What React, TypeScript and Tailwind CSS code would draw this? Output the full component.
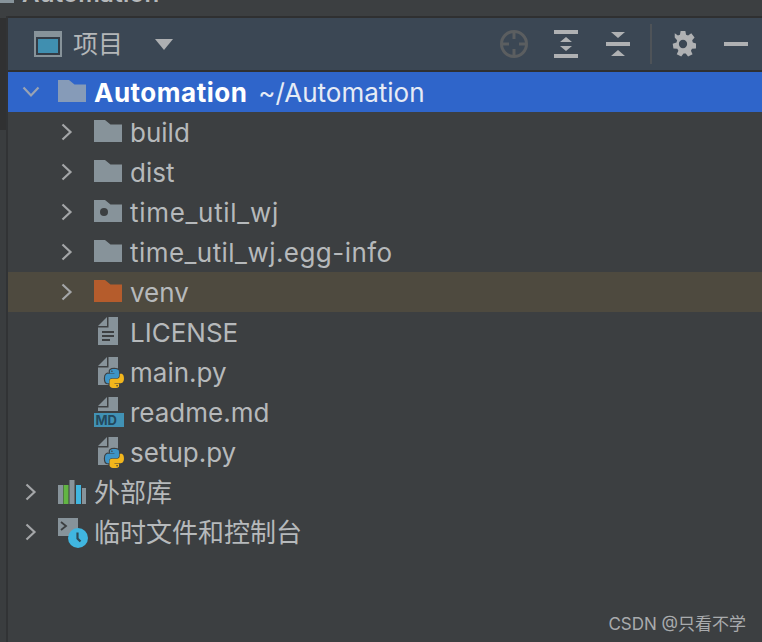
import type { ReactNode } from "react";

const font = "font-['Inter','Noto_Sans_CJK_SC',sans-serif]";

function Folder({ color = "#87939a", dot }: { color?: string; dot?: boolean }) {
  return (
    <svg width="28" height="22" viewBox="0 0 28 22" className="-mt-[2px] shrink-0">
      <path d="M0 0h11l5.500 4.500H28V22H0z" fill={color} />
      {dot && <circle cx="10" cy="12" r="4" fill="#3c3f41" />}
    </svg>
  );
}

function FileBase() {
  return (
    <svg width="32" height="30" viewBox="0 0 32 30" className="-mt-[2px] shrink-0">
      <path d="M4 10l9-9v9z" fill="#87939a" />
      <path d="M14.500 1H24v28H4V11.500h10.500z" fill="#87939a" />
      <g fill="#3c3f41">
        <rect x="8" y="15" width="12" height="2" />
        <rect x="8" y="19" width="12" height="2" />
        <rect x="8" y="23" width="8" height="2" />
      </g>
    </svg>
  );
}

const pythonBlue =
  "M11.900 0C5.800 0 6.200 2.600 6.200 2.600v2.700H12v.8H3.900S0 5.700 0 11.900s3.400 6 3.400 6h2V15s-.1-3.400 3.400-3.400h5.700s3.200.05 3.200-3.100V3.200S18.200 0 11.900 0zM8.700 1.800a1 1 0 1 1 0 2.100 1 1 0 0 1 0-2.100z";
const pythonYellow =
  "M12.100 24c6.100 0 5.700-2.600 5.700-2.600v-2.700H12v-.8h8.100s3.900.4 3.900-5.800-3.400-6-3.400-6h-2V9s.1 3.400-3.400 3.400H9s-3.200-.05-3.200 3.100v5.300S5.800 24 12.100 24zm3.200-1.800a1 1 0 1 1 0-2.100 1 1 0 0 1 0 2.100z";

function PythonFile() {
  return (
    <svg width="32" height="34" viewBox="0 0 32 34" className="shrink-0">
      <path d="M4 11l9-9v9z" fill="#87939a" />
      <path d="M14.500 2H24v28H4V12.500h10.500z" fill="#87939a" />
      <g transform="translate(11 14) scale(0.79)">
        <path d={pythonBlue} fill="#3c3f41" stroke="#3c3f41" strokeWidth="3" />
        <path d={pythonYellow} fill="#3c3f41" stroke="#3c3f41" strokeWidth="3" />
        <path d={pythonBlue} fill="#3d94c6" fillRule="evenodd" />
        <path d={pythonYellow} fill="#f2b61c" fillRule="evenodd" />
      </g>
    </svg>
  );
}

function MdFile() {
  return (
    <svg width="32" height="32" viewBox="0 0 32 32" className="shrink-0">
      <path d="M4 10l9-9v9z" fill="#87939a" />
      <path d="M14.500 1H24v14H4v-3.500h10.500z" fill="#87939a" />
      <rect x="0" y="17" width="30" height="14" fill="#4192b5" />
      <text x="1.500" y="29" fontSize="13" fontWeight="700" fontFamily="Inter, sans-serif" fill="#24485c">MD</text>
    </svg>
  );
}

function LibIcon() {
  return (
    <svg width="28" height="24" viewBox="0 0 28 24" className="shrink-0">
      <rect x="0" y="5" width="5" height="19" fill="#87939a" />
      <rect x="5.500" y="5" width="5" height="19" fill="#62b543" />
      <rect x="11.500" y="0" width="5" height="24" fill="#87939a" />
      <rect x="18" y="5" width="5" height="19" fill="#40b6e0" />
      <rect x="24" y="8" width="4" height="16" fill="#87939a" />
    </svg>
  );
}

function ScratchIcon() {
  return (
    <svg width="32" height="32" viewBox="0 0 32 32" className="shrink-0">
      <rect x="0" y="2" width="20" height="18" fill="#87939a" />
      <path d="M3 6l5 4-5 4" fill="none" stroke="#3c3f41" strokeWidth="1.800" />
      <circle cx="20" cy="22" r="10" fill="#40b6e0" />
      <path d="M19.500 16.500v6l3 3" fill="none" stroke="#2d4a57" strokeWidth="2.200" />
    </svg>
  );
}

function Arrow() {
  return (
    <svg width="12" height="18" viewBox="0 0 12 18" className="ml-[3px] shrink-0">
      <path d="M1.500 1.500L9.500 9l-8 7.500" fill="none" stroke="#a4a6a8" strokeWidth="2.200" />
    </svg>
  );
}

function Row({
  indent,
  icon,
  label,
  arrow = true,
  className = "",
  labelClass = "",
}: {
  indent: string;
  icon: ReactNode;
  label: string;
  arrow?: boolean;
  className?: string;
  labelClass?: string;
}) {
  return (
    <div className={`flex h-10 items-center ${className}`}>
      <div className={`flex items-center ${indent}`}>
        <div className="flex w-[36px] justify-start">{arrow && <Arrow />}</div>
        <div className="flex w-[36px] items-center">{icon}</div>
        <span className={`mt-[1px] text-[26px] leading-none whitespace-nowrap text-[#b6b9bb] ${labelClass}`}>{label}</span>
      </div>
    </div>
  );
}

export default function App() {
  return (
    <div className={`${font} relative flex h-[642px] w-[762px] overflow-hidden bg-[#3c3f41]`}>
      <div className="flex w-[6px] shrink-0 flex-col">
        <div className="h-[18px] shrink-0" />
        <div className="h-[112px] shrink-0 bg-[#303132]" />
        <div className="flex-1 bg-[#3a3d3f]" />
      </div>
      <div className="w-[2px] shrink-0 bg-[#313335]" />
      <div className="flex min-w-0 flex-1 flex-col">
        <div className="-ml-2 flex h-4 items-start overflow-hidden bg-[#3c3f41]">
          <div className="h-[3px] w-[14px] shrink-0 bg-[#87939a]" />
          <span className="-mt-[18px] ml-2 text-[24px] leading-none font-semibold tracking-[0.3px] whitespace-nowrap text-[#b6b9bb]">
            Automation
          </span>
        </div>
        <div className="h-[2px] bg-[#2f3031]" />
        <div className="flex h-[52px] items-center bg-[#3b4754] pr-[14px] pl-[26px]">
          <svg width="28" height="26" viewBox="0 0 28 26" className="shrink-0">
            <rect x="0" y="0" width="28" height="26" fill="#87939a" />
            <rect x="2" y="6" width="24" height="18" fill="#333c46" />
            <rect x="4" y="8" width="20" height="14" fill="#408fb0" />
          </svg>
          <span className="ml-[11px] text-[25px] leading-none text-[#b4b7b9]">项目</span>
          <svg width="18" height="11" viewBox="0 0 18 11" className="ml-[32px] shrink-0">
            <path d="M0 0h18l-9 11z" fill="#aeb0b2" />
          </svg>
          <div className="ml-auto flex items-center">
            <svg width="30" height="30" viewBox="0 0 30 30" className="shrink-0">
              <circle cx="15" cy="15" r="12.500" fill="none" stroke="#5b5e60" strokeWidth="3" />
              <path d="M15 2v8M15 20v8M2 15h8M20 15h8" stroke="#5b5e60" strokeWidth="3" />
            </svg>
            <svg width="24" height="28" viewBox="0 0 24 28" className="ml-[25px] shrink-0">
              <path d="M0 0h24v4H0zM0 24h24v4H0zM12 7l6 5H6zM12 21l-6-5h12z" fill="#afb1b3" />
            </svg>
            <svg width="24" height="26" viewBox="0 0 24 26" className="ml-[28px] shrink-0">
              <path d="M0 11h24v4H0zM5 1h14l-7 6zM5 25h14l-7-6z" fill="#afb1b3" />
            </svg>
            <div className="mr-[18px] ml-[20px] h-10 w-[2px] bg-[#4e5358]" />
            <svg width="26" height="26" viewBox="2 1 20 22" className="shrink-0">
              <path
                fillRule="evenodd"
                d="M14 1l.6 3.100 1.700.7L19 3l2.800 3.400-2 2.500.5 1.800 3.200 1-.6 4.200-3.300.2-.9 1.600 1.400 2.900-3.800 2-2-2.600h-1.800l-2 2.600-3.800-2 1.400-2.900-.9-1.600-3.300-.2-.6-4.200 3.200-1 .5-1.800-2-2.500L5 3l2.700 1.800 1.700-.7L10 1zM12 8.500a3.500 3.500 0 1 0 0 7 3.500 3.500 0 0 0 0-7z"
                fill="#afb1b3"
              />
            </svg>
            <div className="ml-[28px] h-1 w-6 bg-[#afb1b3]" />
          </div>
        </div>
        <div className="h-[2px] bg-[#2f3031]" />
        <div className="flex h-10 items-center bg-[#2f65ca]">
          <svg width="18" height="12" viewBox="0 0 18 12" className="ml-[14px] shrink-0">
            <path d="M1.500 1.500L9 9.500l7.500-8" fill="none" stroke="#9aa3b3" strokeWidth="2.200" />
          </svg>
          <div className="ml-[18px] flex w-[36px] items-center">
            <Folder color="#869bb8" />
          </div>
          <span className="mt-[1px] text-[26px] leading-none font-bold tracking-[0.5px] text-white">Automation</span>
          <span className="mt-[1px] ml-[11px] text-[26px] leading-none text-[#e6ebf5]">~/Automation</span>
        </div>
        <Row indent="pl-[50px]" icon={<Folder />} label="build" />
        <Row indent="pl-[50px]" icon={<Folder />} label="dist" />
        <Row indent="pl-[50px]" icon={<Folder dot />} label="time_util_wj" labelClass="tracking-[0.7px]" />
        <Row indent="pl-[50px]" icon={<Folder />} label="time_util_wj.egg-info" labelClass="tracking-[0.45px]" />
        <Row indent="pl-[50px]" icon={<Folder color="#b55c2c" />} label="venv" className="bg-[#4e4a3f]" />
        <Row indent="pl-[50px]" arrow={false} icon={<FileBase />} label="LICENSE" />
        <Row indent="pl-[50px]" arrow={false} icon={<PythonFile />} label="main.py" />
        <Row indent="pl-[50px]" arrow={false} icon={<MdFile />} label="readme.md" />
        <Row indent="pl-[50px]" arrow={false} icon={<PythonFile />} label="setup.py" />
        <Row indent="pl-[14px]" icon={<LibIcon />} label="外部库" />
        <Row indent="pl-[14px]" icon={<ScratchIcon />} label="临时文件和控制台" />
      </div>
      <span className="absolute right-[16px] bottom-[9px] text-[17px] leading-none text-[#a9abad]">CSDN @只看不学</span>
    </div>
  );
}
